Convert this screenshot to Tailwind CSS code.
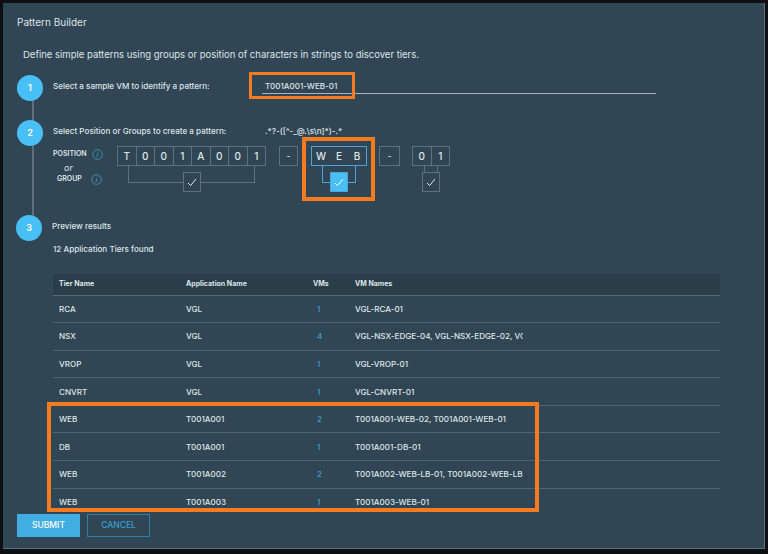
<!DOCTYPE html>
<html lang="en">
<head>
<meta charset="UTF-8" />
<title>Pattern Builder</title>
<script src="https://cdn.jsdelivr.net/npm/@tailwindcss/browser@4"></script>
</head>
<body class="bg-[#0d0f10] w-[768px] h-[554px] overflow-hidden font-['Inter','Noto_Sans',sans-serif] text-[#dfe4e7]">
  <!-- Modal -->
  <div class="relative ml-[3px] mt-[3px] w-[762px] h-[546px] bg-[#304654] border-r border-b border-[#5b6f7c] pl-[14px] pt-[13px]">
    <h1 class="text-[10px] leading-[12px] h-[12px]">Pattern Builder</h1>
    <p class="mt-[21px] ml-[6px] text-[9.5px] leading-[12px]">Define simple patterns using groups or position of characters in strings to discover tiers.</p>

    <!-- Steps -->
    <div class="relative mt-[14px]">
      <div class="absolute left-[15px] top-[20px] w-[2px] h-[125px] bg-[#5c6f7b]"></div>

      <!-- Step 1 -->
      <div class="relative flex items-start h-[26px]">
        <div class="w-[26px] h-[26px] rounded-full bg-[#49c0f5] flex items-center justify-center text-[9px] font-semibold text-white">1</div>
        <span class="ml-[10px] w-[209px] mt-[5px] text-[8.1px] leading-[12px] font-medium">Select a sample VM to identify a pattern:</span>
        <div class="w-[394px] h-[14px] mt-[5px] border-b border-[#a9b5bc] pl-[3px] text-[8.1px] font-medium leading-[12px]">T001A001-WEB-01</div>
      </div>

      <!-- Step 2 -->
      <div class="relative flex items-center h-[26px] mt-[19px]">
        <div class="w-[26px] h-[26px] rounded-full bg-[#49c0f5] flex items-center justify-center text-[9px] font-semibold text-white">2</div>
        <span class="ml-[10px] w-[212px] text-[8.1px] font-medium -mt-[3px]">Select Position or Groups to create a pattern:</span>
        <span class="text-[8.1px] font-medium -mt-[3px]">.*?-([^-_@.\s\n]*)-.*</span>
      </div>

      <div class="relative flex ml-[36px] h-[69px]">
        <!-- Position / group labels -->
        <div class="w-[64px] pt-[2px] text-[7px] font-semibold leading-[12px] relative">
          <div class="flex items-center h-[12px]">
            <span>POSITION</span>
            <svg class="ml-[5px]" width="11" height="11" viewBox="0 0 11 11"><circle cx="5.5" cy="5.5" r="4.8" fill="none" stroke="#3f9fd0" stroke-width="0.8"/><path d="M5.9 3.2v.6M5.6 4.8l-.5 2.9" stroke="#3f9fd0" stroke-width="0.9" fill="none"/></svg>
          </div>
          <div class="ml-[11px] h-[13px] leading-[15px] italic text-[9px] font-normal">or</div>
          <div class="flex items-center h-[12px] ml-[4px]">
            <span>GROUP</span>
            <svg class="ml-[9px]" width="11" height="11" viewBox="0 0 11 11"><circle cx="5.5" cy="5.5" r="4.8" fill="none" stroke="#3f9fd0" stroke-width="0.8"/><path d="M5.9 3.2v.6M5.6 4.8l-.5 2.9" stroke="#3f9fd0" stroke-width="0.9" fill="none"/></svg>
          </div>
        </div>

        <!-- Characters -->
        <div class="flex items-start">
          <div class="relative">
            <div class="flex border border-[#5d7180] h-[20px] w-[149px] text-[10px] font-medium leading-[18px] text-center">
              <span class="flex-1 border-r border-[#5d7180]">T</span>
              <span class="flex-1 border-r border-[#5d7180]">0</span>
              <span class="flex-1 border-r border-[#5d7180]">0</span>
              <span class="flex-1 border-r border-[#5d7180]">1</span>
              <span class="flex-1 border-r border-[#5d7180]">A</span>
              <span class="flex-1 border-r border-[#5d7180]">0</span>
              <span class="flex-1 border-r border-[#5d7180]">0</span>
              <span class="flex-1">1</span>
            </div>
            <div class="h-[17px] mx-[11px] border-x border-b border-[#5d7180]"></div>
            <div class="absolute left-[66px] top-[26px] w-[18px] h-[20px] bg-[#304654] border border-[#5d7180] flex items-center justify-center">
              <svg width="10" height="9" viewBox="0 0 10 9"><path d="M1 5l2.6 2.6L9 1" fill="none" stroke="#e6eaec" stroke-width="1"/></svg>
            </div>
          </div>

          <div class="ml-[13px] w-[19px] h-[20px] border border-[#5d7180] text-[9px] leading-[17px] text-center">-</div>

          <div class="relative ml-[13px]">
            <div class="flex border border-[#4aa6d6] h-[20px] w-[56px] text-[10px] font-medium leading-[18px] text-center">
              <span class="flex-1">W</span>
              <span class="flex-1">E</span>
              <span class="flex-1">B</span>
            </div>
            <div class="h-[17px] mx-[11px] border-x border-b border-[#4aa6d6]"></div>
            <div class="absolute left-[19px] top-[26px] w-[18px] h-[20px] bg-[#49c0f5] border border-[#4aa6d6] flex items-center justify-center">
              <svg width="10" height="9" viewBox="0 0 10 9"><path d="M1 5l2.6 2.6L9 1" fill="none" stroke="#ffffff" stroke-width="1"/></svg>
            </div>
          </div>

          <div class="ml-[12px] w-[21px] h-[20px] border border-[#5d7180] text-[9px] leading-[17px] text-center">-</div>

          <div class="relative ml-[12px]">
            <div class="flex border border-[#5d7180] h-[20px] w-[38px] text-[10px] font-medium leading-[18px] text-center">
              <span class="flex-1 border-r border-[#5d7180]">0</span>
              <span class="flex-1">1</span>
            </div>
            <div class="h-[6px] mx-[12px] border-x border-[#5d7180]"></div>
            <div class="absolute left-[10px] top-[26px] w-[18px] h-[20px] bg-[#304654] border border-[#5d7180] flex items-center justify-center">
              <svg width="10" height="9" viewBox="0 0 10 9"><path d="M1 5l2.6 2.6L9 1" fill="none" stroke="#e6eaec" stroke-width="1"/></svg>
            </div>
          </div>
        </div>
      </div>

      <!-- Step 3 -->
      <div class="relative flex items-center h-[26px]">
        <div class="w-[26px] h-[26px] rounded-full bg-[#49c0f5] flex items-center justify-center text-[9px] font-semibold text-white -ml-[1px]">3</div>
        <span class="ml-[10px] text-[8.1px] font-medium -mt-[4px]">Preview results</span>
      </div>
      <p class="ml-[36px] mt-[2px] text-[8.1px] font-medium leading-[12px]">12 Application Tiers found</p>
    </div>

    <!-- Results table -->
    <div class="ml-[36px] mt-[19px] w-[667px] h-[236px] overflow-hidden">
      <table class="table-fixed w-full text-left text-[8.1px] font-medium">
        <thead>
          <tr class="bg-[#2a3e4a] h-[21px] border-b border-[#566c7a] text-[7px] font-bold">
            <th class="w-[133px] pl-[6px] font-bold">Tier Name</th>
            <th class="w-[127px] font-bold">Application Name</th>
            <th class="w-[42px] font-bold">VMs</th>
            <th class="font-bold"><div class="w-[168px]">VM Names</div></th>
          </tr>
        </thead>
        <tbody>
          <tr class="h-[27.6px] border-b border-[#4d6473]"><td class="pl-[6px]">RCA</td><td>VGL</td><td class="pl-[4px] text-[#3a9fd4]">1</td><td><div class="w-[168px] overflow-hidden whitespace-nowrap">VGL-RCA-01</div></td></tr>
          <tr class="h-[27.6px] border-b border-[#4d6473]"><td class="pl-[6px]">NSX</td><td>VGL</td><td class="pl-[4px] text-[#3a9fd4]">4</td><td><div class="w-[168px] overflow-hidden whitespace-nowrap">VGL-NSX-EDGE-04, VGL-NSX-EDGE-02, VGL-NSX-EDGE-03</div></td></tr>
          <tr class="h-[27.6px] border-b border-[#4d6473]"><td class="pl-[6px]">VROP</td><td>VGL</td><td class="pl-[4px] text-[#3a9fd4]">1</td><td><div class="w-[168px] overflow-hidden whitespace-nowrap">VGL-VROP-01</div></td></tr>
          <tr class="h-[27.6px] border-b border-[#4d6473]"><td class="pl-[6px]">CNVRT</td><td>VGL</td><td class="pl-[4px] text-[#3a9fd4]">1</td><td><div class="w-[168px] overflow-hidden whitespace-nowrap">VGL-CNVRT-01</div></td></tr>
          <tr class="h-[27.6px] border-b border-[#4d6473]"><td class="pl-[6px]">WEB</td><td>T001A001</td><td class="pl-[4px] text-[#3a9fd4]">2</td><td><div class="w-[168px] overflow-hidden whitespace-nowrap">T001A001-WEB-02, T001A001-WEB-01</div></td></tr>
          <tr class="h-[27.6px] border-b border-[#4d6473]"><td class="pl-[6px]">DB</td><td>T001A001</td><td class="pl-[4px] text-[#3a9fd4]">1</td><td><div class="w-[168px] overflow-hidden whitespace-nowrap">T001A001-DB-01</div></td></tr>
          <tr class="h-[27.6px] border-b border-[#4d6473]"><td class="pl-[6px]">WEB</td><td>T001A002</td><td class="pl-[4px] text-[#3a9fd4]">2</td><td><div class="w-[168px] overflow-hidden whitespace-nowrap">T001A002-WEB-LB-01, T001A002-WEB-LB-02</div></td></tr>
          <tr class="h-[27.6px]"><td class="pl-[6px]">WEB</td><td>T001A003</td><td class="pl-[4px] text-[#3a9fd4]">1</td><td><div class="w-[168px] overflow-hidden whitespace-nowrap">T001A003-WEB-01</div></td></tr>
        </tbody>
      </table>
    </div>

    <!-- Buttons -->
    <div class="absolute left-[14px] top-[511px] flex gap-[7px] text-[8.5px] font-medium">
      <button class="w-[63px] h-[23px] bg-[#41ade0] text-white">SUBMIT</button>
      <button class="w-[63px] h-[23px] border border-[#2f7fa8] text-[#3a9fd4]">CANCEL</button>
    </div>

    <!-- Orange highlight boxes -->
    <div class="absolute left-[246px] top-[69px] w-[106px] h-[27px] border-[3px] border-[#f47b20]"></div>
    <div class="absolute left-[299px] top-[134px] w-[73px] h-[64px] border-[4px] border-[#f47b20]"></div>
    <div class="absolute left-[44px] top-[399px] w-[492px] h-[110px] border-[4px] border-[#f47b20]"></div>
  </div>
</body>
</html>
